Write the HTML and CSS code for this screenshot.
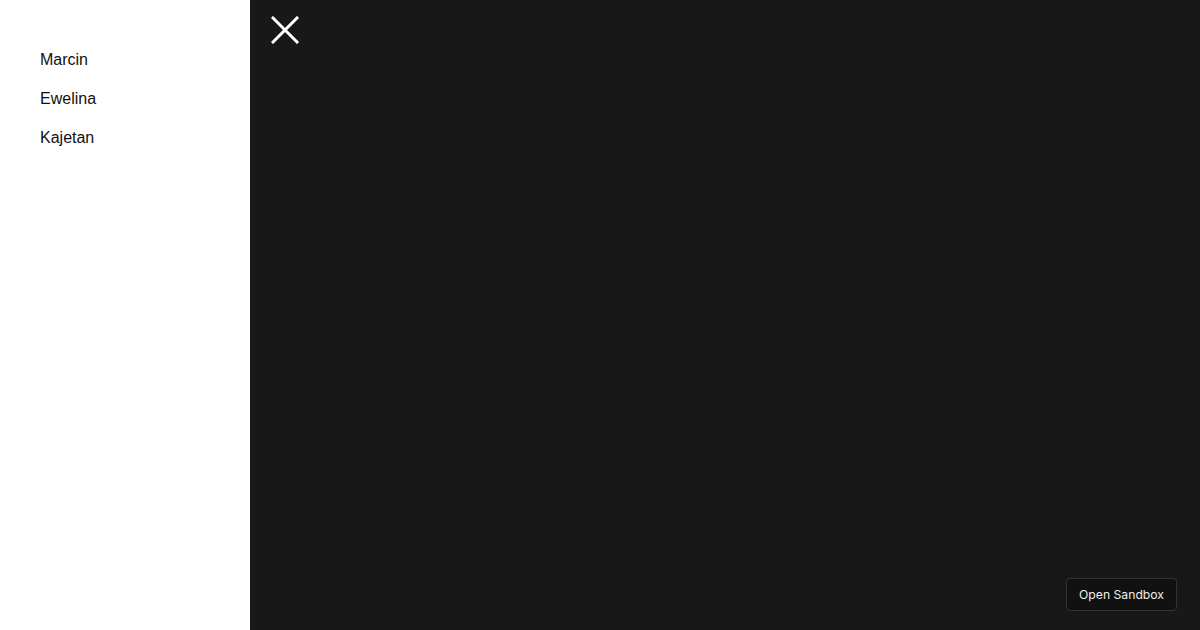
FILE: index.html
```html
<!DOCTYPE html>
<html>
<head>
<meta charset="utf-8">
<link rel="stylesheet" href="styles.css">
</head>
<body>
<div class="app">
  <nav class="sidebar">
    <a class="item">Marcin</a>
    <a class="item">Ewelina</a>
    <a class="item">Kajetan</a>
  </nav>
  <main class="stage">
    <button class="close" aria-label="Close">
      <svg width="28" height="28" viewBox="0 0 28 28"><path d="M2 2L26 26M26 2L2 26" stroke="#fff" stroke-width="3" stroke-linecap="square" fill="none"/></svg>
    </button>
    <button class="sandbox">Open Sandbox</button>
  </main>
</div>
</body>
</html>
```
FILE: styles.css
```css
html, body { margin: 0; height: 100%; }
body { font-family: "Liberation Sans", Arial, sans-serif; }
.app { display: flex; height: 630px; }
.sidebar {
  width: 250px;
  background: #fff;
  padding: 51px 0 0 40px;
  box-sizing: border-box;
  display: flex;
  flex-direction: column;
  gap: 21px;
}
.item { font-size: 16px; line-height: 18px; color: #111; }
.stage {
  flex: 1;
  background: #181818;
  position: relative;
}
.close {
  position: absolute;
  left: 21px;
  top: 16px;
  width: 28px;
  height: 28px;
  padding: 0;
  border: 0;
  background: none;
  display: block;
}
.close svg { display: block; }
.sandbox {
  position: absolute;
  right: 23px;
  bottom: 19px;
  width: 111px;
  height: 33px;
  padding: 0;
  background: #111;
  border: 1px solid #333;
  border-radius: 4px;
  color: #eee;
  font-family: Inter, "Liberation Sans", sans-serif;
  font-size: 12.2px;
}
```
